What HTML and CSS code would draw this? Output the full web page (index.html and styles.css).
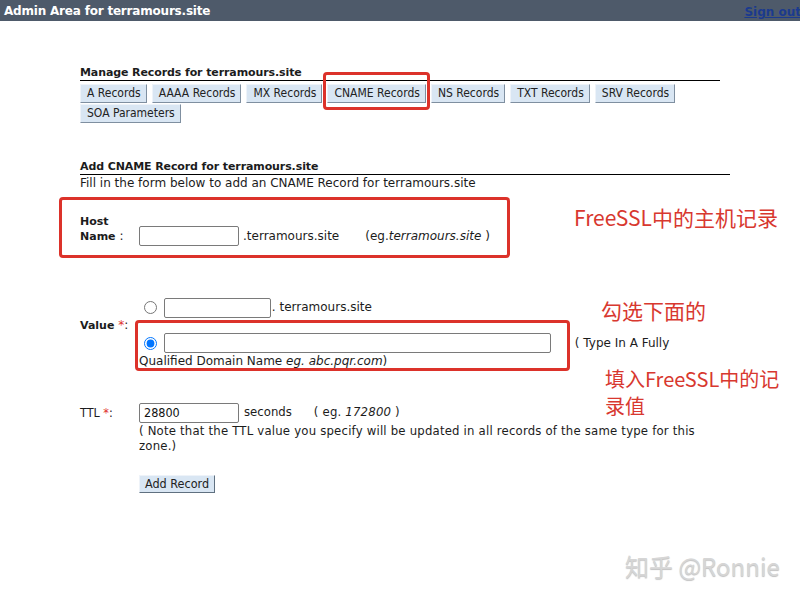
FILE: index.html
```html
<!DOCTYPE html>
<html>
<head>
<meta charset="utf-8">
<title>Admin Area for terramours.site</title>
<link rel="stylesheet" href="styles.css">
</head>
<body>
<div class="topbar">
  <span class="title">Admin Area for terramours.site</span>
  <a class="signout" href="#">Sign out</a>
</div>

<div class="main">
  <div class="section-head">Manage Records for terramours.site</div>
  <div class="tabs">
    <span class="tab">A Records</span>
    <span class="tab">AAAA Records</span>
    <span class="tab">MX Records</span>
    <span class="tab">CNAME Records</span>
    <span class="tab">NS Records</span>
    <span class="tab">TXT Records</span>
    <span class="tab">SRV Records</span>
    <span class="tab">SOA Parameters</span>
  </div>

  <div class="section-head add-head">Add CNAME Record for terramours.site</div>
  <div class="intro">Fill in the form below to add an CNAME Record for terramours.site</div>

  <div class="row host-row">
    <div class="label"><b>Host Name</b> :</div>
    <div class="field host-field"><input class="txt short" type="text">.terramours.site<span class="eg">(eg.<i>terramours.site</i> )</span></div>
  </div>

  <div class="row value-row">
    <div class="label value-label"><b>Value</b> <span class="req">*</span>:</div>
    <div class="field">
      <div class="opt opt1"><input class="radio" type="radio" name="v"> <input class="txt medium" type="text">. terramours.site</div>
      <div class="opt opt2"><input class="radio" type="radio" name="v" checked> <input class="txt long" type="text"><span class="hint">( Type In A Fully Qualified Domain Name <i>eg. abc.pqr.com</i>)</span></div>
    </div>
  </div>

  <div class="row ttl-row">
    <div class="label ttl-label">TTL <span class="req">*</span>:</div>
    <div class="field ttl-field">
      <div class="ttl-line"><input class="txt short ttl-input" type="text" value="28800"><span class="sec">seconds</span><span class="eg2">( eg. <i>172800</i> )</span></div>
      <div class="note">( Note that the TTL value you specify will be updated in all records of the same type for this zone.)</div>
      <button class="btn" type="button">Add Record</button>
    </div>
  </div>
</div>

<div class="mark box-cname"></div>
<div class="mark box-host"></div>
<div class="mark box-value"></div>
<div class="annot a-host">FreeSSL中的主机记录</div>
<div class="annot a-check">勾选下面的</div>
<div class="annot a-fill">填入FreeSSL中的记<br>录值</div>
<div class="watermark">知乎 @Ronnie</div>
</body>
</html>
```

FILE: styles.css
```css
html, body {
  margin: 0;
  padding: 0;
  background: #fff;
  overflow: hidden;
}
body {
  width: 800px;
  height: 599px;
  position: relative;
  font-family: "DejaVu Sans", Verdana, sans-serif;
  font-size: 12px;
  color: #1c1c1c;
}

.topbar {
  height: 21px;
  background: #4e5a6a;
  display: flex;
  justify-content: space-between;
  align-items: center;
  padding-left: 4px;
}
.title {
  color: #fff;
  font-weight: bold;
  font-size: 12px;
  letter-spacing: -0.2px;
}
.signout {
  color: #1b3a8e;
  font-weight: bold;
  font-size: 12px;
  text-decoration: underline;
  margin-right: -1px;
  margin-top: 3px;
}

.main {
  margin-left: 80px;
  width: 640px;
}

.section-head {
  font-weight: bold;
  font-size: 11px;
  line-height: 14px;
  border-bottom: 1px solid #000;
  margin-top: 45px;
  letter-spacing: -0.1px;
}
.add-head {
  margin-top: 37px;
  width: 650px;
}

.tabs {
  display: flex;
  flex-wrap: wrap;
  row-gap: 1px;
  margin-top: 3px;
}
.tab {
  font-family: "DejaVu Sans Condensed", "DejaVu Sans", sans-serif;
  font-stretch: condensed;
  font-size: 12px;
  line-height: 17px;
  padding: 0 5px 0 6px;
  background: #d9e6f3;
  border: 1px solid;
  border-color: #eef3f9 #7f8fa0 #7f8fa0 #eef3f9;
  margin-right: 5px;
  color: #222;
}

.intro {
  line-height: 14px;
  margin-top: 1px;
}

.row {
  display: flex;
}
.label {
  width: 59px;
  flex: none;
  line-height: 15px;
}
.label b {
  font-size: 11px;
}
.field {
  flex: 1;
}

.host-row {
  margin-top: 24px;
  align-items: flex-end;
}
.host-field {
  line-height: 20px;
  margin-bottom: -2px;
}
.eg {
  margin-left: 26px;
}

.txt {
  box-sizing: border-box;
  height: 20px;
  border: 1px solid #7a7a7a;
  border-radius: 2px;
  padding: 1px 4px;
  margin: 0 4px 0 0;
  vertical-align: middle;
  font-family: "DejaVu Sans Condensed", "DejaVu Sans", sans-serif;
  font-stretch: condensed;
  font-size: 12.5px;
  color: #111;
  background: #fff;
}
.short { width: 100px; }
.medium { width: 107px; margin-right: 1px; }
.long { width: 387px; margin-right: 0; }

.value-row {
  margin-top: 53px;
}
.value-label {
  margin-top: 21px;
}
.req {
  color: #e0302a;
}
.radio {
  width: 13px;
  height: 13px;
  margin: 0 3px 0 5px;
  vertical-align: middle;
}
.opt1 {
  height: 20px;
  line-height: 20px;
}
.opt2 {
  margin-top: 16px;
  line-height: 14px;
}
.opt2 .txt {
  margin-bottom: 1px;
}
.hint {
  margin-left: 24px;
}
.hint i { font-style: italic; }

.ttl-row {
  margin-top: 34px;
  font-family: "DejaVu Sans Condensed", "DejaVu Sans", sans-serif;
  font-stretch: condensed;
  font-size: 13px;
}
.ttl-label {
  line-height: 20px;
  margin-top: 1px;
  font-size: 12.5px;
}
.ttl-line {
  line-height: 20px;
  height: 20px;
}
.ttl-input { margin-right: 5px; }
.eg2 { margin-left: 22px; letter-spacing: 0.2px; }
.note {
  line-height: 15px;
  margin-top: 1px;
  width: 565px;
  letter-spacing: 0.2px;
}
.btn {
  display: block;
  margin-top: 22px;
  font-family: "DejaVu Sans Condensed", "DejaVu Sans", sans-serif;
  font-stretch: condensed;
  font-size: 12.5px;
  line-height: 16px;
  padding: 0 5px;
  background: #d9e6f3;
  border: 1px solid;
  border-color: #eef3f9 #5f7080 #5f7080 #eef3f9;
  color: #222;
}

.mark {
  position: absolute;
  border: 3px solid #dc322a;
  border-radius: 4px;
  box-sizing: border-box;
}
.box-cname { left: 323px; top: 72px; width: 107px; height: 38px; }
.box-host { left: 59px; top: 197px; width: 451px; height: 61px; }
.box-value { left: 135px; top: 320px; width: 435px; height: 51px; }

.annot {
  position: absolute;
  font-family: "Noto Sans CJK SC", "Noto Sans", sans-serif;
  color: #d8382f;
  font-size: 21px;
  line-height: 27px;
}
.a-host { left: 574px; top: 204px; }
.a-check { left: 601px; top: 297px; }
.a-fill { left: 605px; top: 365px; font-size: 20px; }

.watermark {
  position: absolute;
  left: 625px;
  top: 550px;
  font-family: "Noto Sans CJK SC", "Noto Sans", sans-serif;
  font-size: 24px;
  line-height: 32px;
  color: #d6d6d6;
  text-shadow: 0 1px 1px rgba(0,0,0,0.25);
}
```
